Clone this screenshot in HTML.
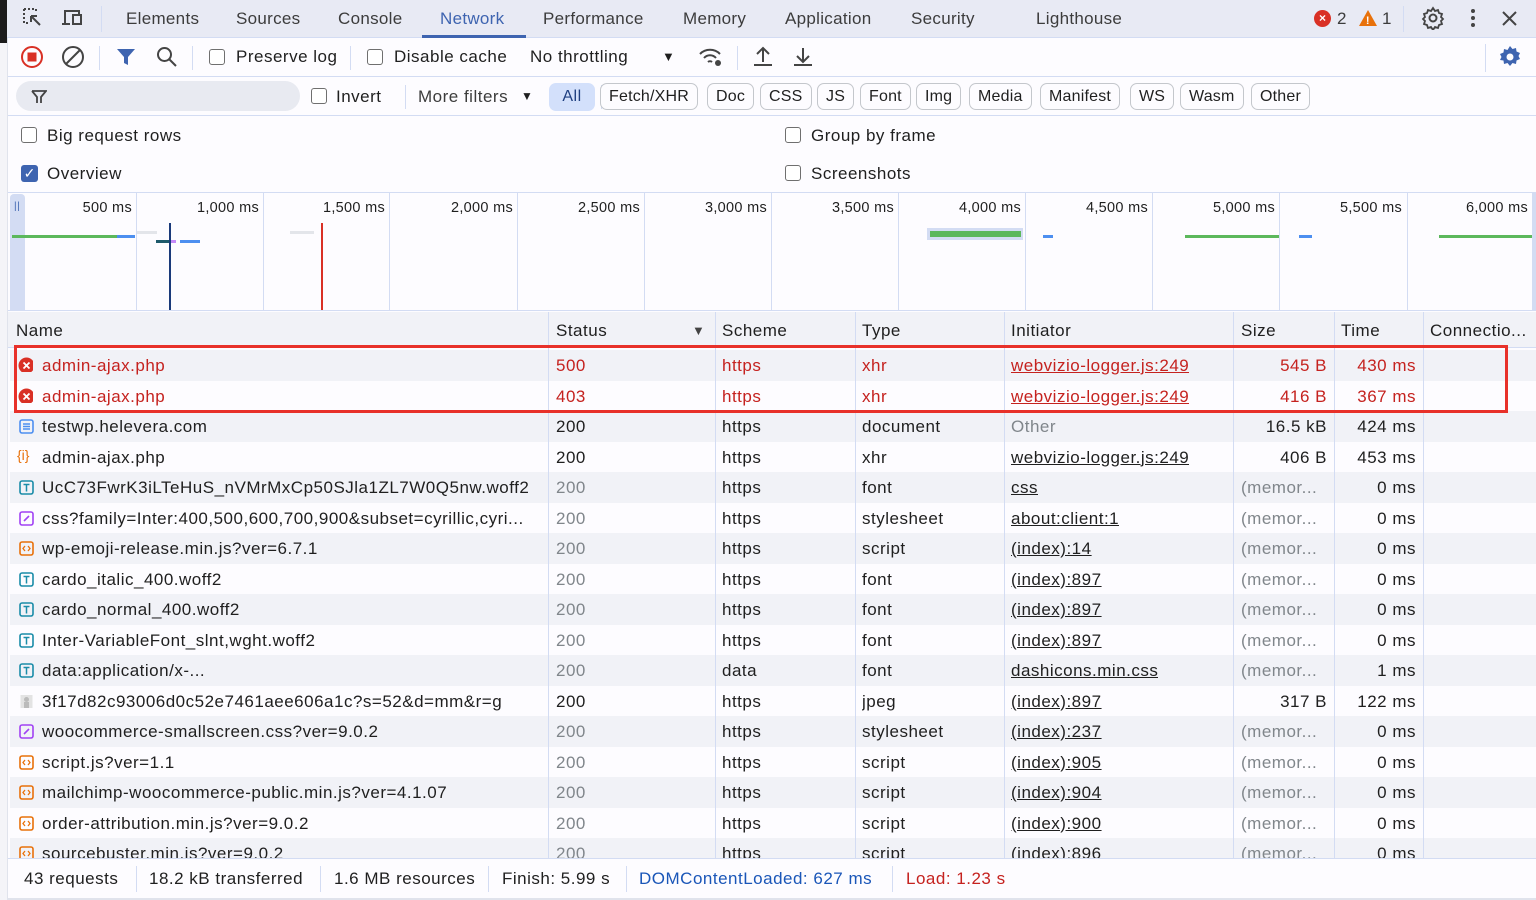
<!DOCTYPE html>
<html><head><meta charset="utf-8"><style>
*{box-sizing:border-box;margin:0;padding:0}
body{width:1536px;height:900px;overflow:hidden;background:#fdfcff;font-family:"Liberation Sans",Arial,sans-serif;font-size:17px;color:#1f1f1f;position:relative;letter-spacing:0.5px}
.a{position:absolute;white-space:nowrap}
.tabs{position:absolute;left:0;top:0;width:1536px;height:38px;background:#e8eaf4;border-bottom:1px solid #d3dcf3}
.tab{position:absolute;top:9px;color:#3c3c3c;font-size:17px;letter-spacing:0.3px}
.bar{position:absolute;left:8px;width:1528px;background:#fdfcff;border-bottom:1px solid #d3dcf3}
.cb{position:absolute;width:16px;height:16px;border:1.5px solid #6f6f6f;border-radius:3px;background:#fff}
.chip{position:absolute;top:83px;height:27px;border:1px solid #c4c7cc;border-radius:7px;padding:4px 8px 0;font-size:16px;color:#1f1f1f;background:#fdfcff;letter-spacing:0.2px}
.vl{position:absolute;width:1px;background:#d3dcf3}
.row{position:absolute;left:10px;width:1526px;height:30.5px}
.c{position:absolute;top:6px;white-space:nowrap;overflow:hidden}
.err{color:#c5221f}
.g{color:#80868b}
.u{text-decoration:underline}
.ic{position:absolute;left:9px;top:8px;width:15px;height:15px}
</style></head><body>
<div class="a" style="left:0;top:0;width:7px;height:43px;background:#1b1b1b;z-index:3"></div>
<div class="tabs">
<svg class="a" style="left:22px;top:7px" width="22" height="22" viewBox="0 0 22 22"><path d="M2 2h12v4M2 2v14h4" stroke="#444" stroke-width="2" stroke-dasharray="2 2" fill="none"/><path d="M9 9l9 9M9 9h6M9 9v6" stroke="#444" stroke-width="2" fill="none"/></svg>
<svg class="a" style="left:61px;top:7px" width="24" height="22" viewBox="0 0 24 22"><path d="M4 16V4h14v4M1 17h8" stroke="#444" stroke-width="2" fill="none"/><rect x="12" y="8" width="8" height="9" stroke="#444" stroke-width="2" fill="none"/></svg>
<div class="a" style="left:101px;top:6px;width:1px;height:26px;background:#d3dcf3"></div>
<span class="tab" style="left:126px">Elements</span>
<span class="tab" style="left:236px">Sources</span>
<span class="tab" style="left:338px">Console</span>
<span class="tab" style="left:440px;color:#3e64b0">Network</span>
<div class="a" style="left:422px;top:35px;width:104px;height:3px;background:#3e64b0"></div>
<span class="tab" style="left:543px">Performance</span>
<span class="tab" style="left:683px">Memory</span>
<span class="tab" style="left:785px">Application</span>
<span class="tab" style="left:911px">Security</span>
<span class="tab" style="left:1036px">Lighthouse</span>
<div class="a" style="left:1314px;top:10px;width:17px;height:17px;border-radius:50%;background:#d93025;color:#fff;font-size:12px;text-align:center;line-height:17px;font-weight:bold;letter-spacing:0">×</div>
<span class="tab" style="left:1337px">2</span>
<svg class="a" style="left:1358px;top:9px" width="20" height="18"><path d="M10 1L19 17H1z" fill="#e8710a"/><text x="10" y="15" font-size="11" fill="#fff" text-anchor="middle" font-family="Liberation Sans" font-weight="bold">!</text></svg>
<span class="tab" style="left:1382px">1</span>
<div class="a" style="left:1403px;top:6px;width:1px;height:26px;background:#d3dcf3"></div>
<svg class="a" style="left:1421px;top:6px" width="24" height="24" viewBox="0 0 24 24"><circle cx="12" cy="12" r="3.5" stroke="#444" stroke-width="2" fill="none"/><path d="M12 2l2 3 3-1 1 3 3 1-1 3 2 2-2 2 1 3-3 1-1 3-3-1-2 3-2-3-3 1-1-3-3-1 1-3-2-2 2-2-1-3 3-1 1-3 3 1z" stroke="#444" stroke-width="1.8" fill="none"/></svg>
<div class="a" style="left:1471px;top:9px;width:4px;height:4px;border-radius:2px;background:#444;box-shadow:0 7px 0 #444,0 14px 0 #444"></div>
<svg class="a" style="left:1501px;top:10px" width="17" height="17"><path d="M2 2l13 13M15 2L2 15" stroke="#444" stroke-width="2"/></svg>
</div>
<div class="a" style="left:0;top:38px;width:8px;height:862px;background:#f4f4f8;border-right:1px solid #e0e3ec"></div>
<div class="bar" style="top:38px;height:39px">
<svg class="a" style="left:12px;top:7px" width="24" height="24"><circle cx="12" cy="12" r="10" stroke="#d93025" stroke-width="2" fill="none"/><rect x="7.5" y="7.5" width="9" height="9" fill="#d93025"/></svg>
<svg class="a" style="left:53px;top:7px" width="24" height="24"><circle cx="12" cy="12" r="10" stroke="#444" stroke-width="2" fill="none"/><path d="M5 19L19 5" stroke="#444" stroke-width="2"/></svg>
<div class="a" style="left:91px;top:8px;width:1px;height:24px;background:#d3dcf3"></div>
<svg class="a" style="left:108px;top:9px" width="20" height="20"><path d="M1 2h18l-7 8v8l-4-2v-6z" fill="#3e64b0"/></svg>
<svg class="a" style="left:148px;top:8px" width="22" height="22"><circle cx="8.5" cy="8.5" r="6.5" stroke="#444" stroke-width="2" fill="none"/><path d="M13 13l7 7" stroke="#444" stroke-width="2"/></svg>
<div class="a" style="left:184px;top:8px;width:1px;height:24px;background:#d3dcf3"></div>
<div class="cb" style="left:201px;top:11px"></div><span class="a" style="left:228px;top:9px">Preserve log</span>
<div class="a" style="left:342px;top:8px;width:1px;height:24px;background:#d3dcf3"></div>
<div class="cb" style="left:359px;top:11px"></div><span class="a" style="left:386px;top:9px">Disable cache</span>
<span class="a" style="left:522px;top:9px">No throttling</span>
<span class="a" style="left:654px;top:11px;font-size:13px">▼</span>
<svg class="a" style="left:690px;top:7px" width="26" height="24"><path d="M2 9a14 14 0 0 1 20 0M6 13a8 8 0 0 1 12 0M10 17a3 3 0 0 1 4 0" stroke="#444" stroke-width="2" fill="none"/><circle cx="20" cy="18" r="3" fill="#444"/></svg>
<div class="a" style="left:729px;top:8px;width:1px;height:24px;background:#d3dcf3"></div>
<svg class="a" style="left:744px;top:7px" width="22" height="24"><path d="M11 17V3M5 9l6-6 6 6M2 20h18" stroke="#444" stroke-width="2" fill="none"/></svg>
<svg class="a" style="left:784px;top:7px" width="22" height="24"><path d="M11 3v14M5 11l6 6 6-6M2 20h18" stroke="#444" stroke-width="2" fill="none"/></svg>
<div class="a" style="left:1477px;top:6px;width:1px;height:28px;background:#d3dcf3"></div>
<svg class="a" style="left:1490px;top:7px" width="24" height="24" viewBox="0 0 24 24"><path d="M12 1l2.5 3 3.5-1 .5 3.5 3.5 1.5-1.5 3 1.5 3-3.5 1.5-.5 3.5-3.5-1-2.5 3-2.5-3-3.5 1-.5-3.5L2 15l1.5-3L2 9l3.5-1.5L6 4l3.5 1z" fill="#3e64b0"/><circle cx="12" cy="12" r="3.5" fill="#fdfcff"/></svg>
</div>
<div class="bar" style="top:77px;height:39px">
<div class="a" style="left:8px;top:4px;width:284px;height:30px;border-radius:15px;background:#e8eaf1"></div>
<svg class="a" style="left:23px;top:12px" width="16" height="16"><path d="M1 2h14l-5 6v6M6 14V8L1 2" stroke="#444" stroke-width="1.8" fill="none"/></svg>
<div class="cb" style="left:303px;top:11px"></div><span class="a" style="left:328px;top:10px">Invert</span>
<div class="a" style="left:397px;top:8px;width:1px;height:24px;background:#d3dcf3"></div>
<span class="a" style="left:410px;top:10px;color:#3c3c3c">More filters</span><span class="a" style="left:513px;top:12px;font-size:12px">▼</span>
<div class="a" style="left:541px;top:6px;width:46px;height:28px;border-radius:7px;background:#d3e0fb;text-align:center;padding-top:5px;font-size:16px;color:#1f3f80">All</div>
<div class="a" style="left:593px;top:8px;width:1px;height:24px;background:#d3dcf3"></div>
</div>
<div class="chip" style="left:600px">Fetch/XHR</div>
<div class="chip" style="left:707px">Doc</div>
<div class="chip" style="left:760px">CSS</div>
<div class="chip" style="left:817px">JS</div>
<div class="chip" style="left:860px">Font</div>
<div class="chip" style="left:916px">Img</div>
<div class="chip" style="left:969px">Media</div>
<div class="chip" style="left:1040px">Manifest</div>
<div class="chip" style="left:1130px">WS</div>
<div class="chip" style="left:1180px">Wasm</div>
<div class="chip" style="left:1251px">Other</div>
<div class="cb" style="left:21px;top:127px"></div><span class="a" style="left:47px;top:126px">Big request rows</span>
<div class="cb" style="left:785px;top:127px"></div><span class="a" style="left:811px;top:126px">Group by frame</span>
<div class="a" style="left:21px;top:165px;width:17px;height:17px;border-radius:3px;background:#3e64b0;color:#fff;font-size:14px;text-align:center;line-height:17px;letter-spacing:0">✓</div><span class="a" style="left:47px;top:164px">Overview</span>
<div class="cb" style="left:785px;top:165px"></div><span class="a" style="left:811px;top:164px">Screenshots</span>
<div class="a" style="left:8px;top:192px;width:1528px;height:119px;background:#fdfcff;border-top:1px solid #d3dcf3;border-bottom:1px solid #d3dcf3"></div>
<div class="a" style="left:10px;top:194px;width:15px;height:117px;background:#d3dcf3;border-radius:4px 4px 0 0"></div>
<div class="a" style="left:14px;top:201px;font-size:10px;color:#3e64b0">||</div>
<div class="vl" style="left:136px;top:193px;height:117px"></div>
<div class="vl" style="left:263px;top:193px;height:117px"></div>
<div class="vl" style="left:389px;top:193px;height:117px"></div>
<div class="vl" style="left:517px;top:193px;height:117px"></div>
<div class="vl" style="left:644px;top:193px;height:117px"></div>
<div class="vl" style="left:771px;top:193px;height:117px"></div>
<div class="vl" style="left:898px;top:193px;height:117px"></div>
<div class="vl" style="left:1025px;top:193px;height:117px"></div>
<div class="vl" style="left:1152px;top:193px;height:117px"></div>
<div class="vl" style="left:1279px;top:193px;height:117px"></div>
<div class="vl" style="left:1407px;top:193px;height:117px"></div>
<div style="font-size:14.5px;color:#1f1f1f;letter-spacing:0.3px">
<span class="a" style="right:1404px;top:200px">500 ms</span>
<span class="a" style="right:1277px;top:200px">1,000 ms</span>
<span class="a" style="right:1151px;top:200px">1,500 ms</span>
<span class="a" style="right:1023px;top:200px">2,000 ms</span>
<span class="a" style="right:896px;top:200px">2,500 ms</span>
<span class="a" style="right:769px;top:200px">3,000 ms</span>
<span class="a" style="right:642px;top:200px">3,500 ms</span>
<span class="a" style="right:515px;top:200px">4,000 ms</span>
<span class="a" style="right:388px;top:200px">4,500 ms</span>
<span class="a" style="right:261px;top:200px">5,000 ms</span>
<span class="a" style="right:134px;top:200px">5,500 ms</span>
<span class="a" style="right:8px;top:200px">6,000 ms</span>
</div>
<div class="a" style="left:1532px;top:193px;width:4px;height:117px;background:#d3dcf3"></div>
<div class="a" style="left:12px;top:235px;width:105px;height:3px;background:#5cb85c"></div>
<div class="a" style="left:117px;top:235px;width:18px;height:3px;background:#4d8ff0"></div>
<div class="a" style="left:137px;top:231px;width:20px;height:3px;background:#e3e5ea"></div>
<div class="a" style="left:156px;top:240px;width:13px;height:3px;background:#1e5a6b"></div>
<div class="a" style="left:170px;top:240px;width:6px;height:3px;background:#c58af9"></div>
<div class="a" style="left:180px;top:240px;width:20px;height:3px;background:#4d8ff0"></div>
<div class="a" style="left:290px;top:231px;width:24px;height:3px;background:#e3e5ea"></div>
<div class="a" style="left:169px;top:223px;width:2px;height:87px;background:#1a3a7a"></div>
<div class="a" style="left:321px;top:223px;width:2px;height:87px;background:#d93025"></div>
<div class="a" style="left:927px;top:228px;width:96px;height:12px;background:#d3dcf3"></div>
<div class="a" style="left:930px;top:231px;width:91px;height:6px;background:#5cb85c"></div>
<div class="a" style="left:1043px;top:235px;width:10px;height:3px;background:#4d8ff0"></div>
<div class="a" style="left:1185px;top:235px;width:94px;height:3px;background:#5cb85c"></div>
<div class="a" style="left:1299px;top:235px;width:13px;height:3px;background:#4d8ff0"></div>
<div class="a" style="left:1439px;top:235px;width:93px;height:3px;background:#5cb85c"></div>
<div class="a" style="left:8px;top:312px;width:1528px;height:36px;background:#f1f2f7;border-bottom:1px solid #d3dcf3"></div>
<span class="a" style="left:16px;top:321px">Name</span>
<span class="a" style="left:556px;top:321px">Status</span><span class="a" style="left:692px;top:323px;font-size:13px;color:#444">▼</span>
<span class="a" style="left:722px;top:321px">Scheme</span>
<span class="a" style="left:862px;top:321px">Type</span>
<span class="a" style="left:1011px;top:321px">Initiator</span>
<span class="a" style="left:1241px;top:321px">Size</span>
<span class="a" style="left:1341px;top:321px">Time</span>
<span class="a" style="left:1430px;top:321px">Connectio...</span>
<div id="rows" class="a" style="left:0;top:350px;width:1536px;height:508px;overflow:hidden">
<div class="row" style="top:0;background:#f1f2f7"><svg class="ic" style="left:8px;top:7px" width="17" height="17"><circle cx="8.5" cy="8.5" r="8" fill="#d93025"/><path d="M5.5 5.5l6 6M11.5 5.5l-6 6" stroke="#fff" stroke-width="1.8"/></svg><span class="c err" style="left:32px">admin-ajax.php</span><span class="c err" style="left:546px">500</span><span class="c err" style="left:712px">https</span><span class="c err" style="left:852px">xhr</span><span class="c err u" style="left:1001px">webvizio-logger.js:249</span><span class="c err" style="right:209px">545 B</span><span class="c err" style="right:120px">430 ms</span></div>
<div class="row" style="top:30.5px"><svg class="ic" style="left:8px;top:7px" width="17" height="17"><circle cx="8.5" cy="8.5" r="8" fill="#d93025"/><path d="M5.5 5.5l6 6M11.5 5.5l-6 6" stroke="#fff" stroke-width="1.8"/></svg><span class="c err" style="left:32px">admin-ajax.php</span><span class="c err" style="left:546px">403</span><span class="c err" style="left:712px">https</span><span class="c err" style="left:852px">xhr</span><span class="c err u" style="left:1001px">webvizio-logger.js:249</span><span class="c err" style="right:209px">416 B</span><span class="c err" style="right:120px">367 ms</span></div>
<div class="row" style="top:61px;background:#f1f2f7"><svg class="ic" width="15" height="15"><rect x="1" y="1" width="13" height="13" rx="2" stroke="#4d8ff0" stroke-width="1.6" fill="none"/><path d="M4 5h7M4 7.5h7M4 10h7" stroke="#4d8ff0" stroke-width="1.4"/></svg><span class="c" style="left:32px">testwp.helevera.com</span><span class="c" style="left:546px">200</span><span class="c" style="left:712px">https</span><span class="c" style="left:852px">document</span><span class="c g" style="left:1001px">Other</span><span class="c" style="right:209px">16.5 kB</span><span class="c" style="right:120px">424 ms</span></div>
<div class="row" style="top:91.5px"><span class="ic" style="color:#e8710a;font-size:14px;top:5px;left:7px;letter-spacing:0">{i}</span><span class="c" style="left:32px">admin-ajax.php</span><span class="c" style="left:546px">200</span><span class="c" style="left:712px">https</span><span class="c" style="left:852px">xhr</span><span class="c u" style="left:1001px">webvizio-logger.js:249</span><span class="c" style="right:209px">406 B</span><span class="c" style="right:120px">453 ms</span></div>
<div class="row" style="top:122px;background:#f1f2f7"><svg class="ic" width="15" height="15"><rect x="1" y="1" width="13" height="13" rx="2" stroke="#1a8ca8" stroke-width="1.6" fill="none"/><path d="M4.5 4.5h6M7.5 4.5v7" stroke="#1a8ca8" stroke-width="1.5"/></svg><span class="c" style="left:32px">UcC73FwrK3iLTeHuS_nVMrMxCp50SJla1ZL7W0Q5nw.woff2</span><span class="c g" style="left:546px">200</span><span class="c" style="left:712px">https</span><span class="c" style="left:852px">font</span><span class="c u" style="left:1001px">css</span><span class="c g" style="left:1231px">(memor...</span><span class="c" style="right:120px">0 ms</span></div>
<div class="row" style="top:152.5px"><svg class="ic" width="15" height="15"><rect x="1" y="1" width="13" height="13" rx="2" stroke="#a142f4" stroke-width="1.6" fill="none"/><path d="M5 10l5-5" stroke="#a142f4" stroke-width="1.6"/></svg><span class="c" style="left:32px;width:510px">css?family=Inter:400,500,600,700,900&amp;subset=cyrillic,cyri...</span><span class="c g" style="left:546px">200</span><span class="c" style="left:712px">https</span><span class="c" style="left:852px">stylesheet</span><span class="c u" style="left:1001px">about:client:1</span><span class="c g" style="left:1231px">(memor...</span><span class="c" style="right:120px">0 ms</span></div>
<div class="row" style="top:183px;background:#f1f2f7"><svg class="ic" width="15" height="15"><rect x="1" y="1" width="13" height="13" rx="2" stroke="#e8710a" stroke-width="1.6" fill="none"/><path d="M6 5l-2 2.5 2 2.5M9 5l2 2.5-2 2.5" stroke="#e8710a" stroke-width="1.3" fill="none"/></svg><span class="c" style="left:32px">wp-emoji-release.min.js?ver=6.7.1</span><span class="c g" style="left:546px">200</span><span class="c" style="left:712px">https</span><span class="c" style="left:852px">script</span><span class="c u" style="left:1001px">(index):14</span><span class="c g" style="left:1231px">(memor...</span><span class="c" style="right:120px">0 ms</span></div>
<div class="row" style="top:213.5px"><svg class="ic" width="15" height="15"><rect x="1" y="1" width="13" height="13" rx="2" stroke="#1a8ca8" stroke-width="1.6" fill="none"/><path d="M4.5 4.5h6M7.5 4.5v7" stroke="#1a8ca8" stroke-width="1.5"/></svg><span class="c" style="left:32px">cardo_italic_400.woff2</span><span class="c g" style="left:546px">200</span><span class="c" style="left:712px">https</span><span class="c" style="left:852px">font</span><span class="c u" style="left:1001px">(index):897</span><span class="c g" style="left:1231px">(memor...</span><span class="c" style="right:120px">0 ms</span></div>
<div class="row" style="top:244px;background:#f1f2f7"><svg class="ic" width="15" height="15"><rect x="1" y="1" width="13" height="13" rx="2" stroke="#1a8ca8" stroke-width="1.6" fill="none"/><path d="M4.5 4.5h6M7.5 4.5v7" stroke="#1a8ca8" stroke-width="1.5"/></svg><span class="c" style="left:32px">cardo_normal_400.woff2</span><span class="c g" style="left:546px">200</span><span class="c" style="left:712px">https</span><span class="c" style="left:852px">font</span><span class="c u" style="left:1001px">(index):897</span><span class="c g" style="left:1231px">(memor...</span><span class="c" style="right:120px">0 ms</span></div>
<div class="row" style="top:274.5px"><svg class="ic" width="15" height="15"><rect x="1" y="1" width="13" height="13" rx="2" stroke="#1a8ca8" stroke-width="1.6" fill="none"/><path d="M4.5 4.5h6M7.5 4.5v7" stroke="#1a8ca8" stroke-width="1.5"/></svg><span class="c" style="left:32px">Inter-VariableFont_slnt,wght.woff2</span><span class="c g" style="left:546px">200</span><span class="c" style="left:712px">https</span><span class="c" style="left:852px">font</span><span class="c u" style="left:1001px">(index):897</span><span class="c g" style="left:1231px">(memor...</span><span class="c" style="right:120px">0 ms</span></div>
<div class="row" style="top:305px;background:#f1f2f7"><svg class="ic" width="15" height="15"><rect x="1" y="1" width="13" height="13" rx="2" stroke="#1a8ca8" stroke-width="1.6" fill="none"/><path d="M4.5 4.5h6M7.5 4.5v7" stroke="#1a8ca8" stroke-width="1.5"/></svg><span class="c" style="left:32px">data:application/x-...</span><span class="c g" style="left:546px">200</span><span class="c" style="left:712px">data</span><span class="c" style="left:852px">font</span><span class="c u" style="left:1001px">dashicons.min.css</span><span class="c g" style="left:1231px">(memor...</span><span class="c" style="right:120px">1 ms</span></div>
<div class="row" style="top:335.5px"><svg class="ic" width="15" height="15"><rect x="1.5" y="1" width="12" height="13" fill="#e3e3e3"/><path d="M5 14V8h5v6" fill="#bbb"/><circle cx="7.5" cy="5.5" r="2.5" fill="#bbb"/></svg><span class="c" style="left:32px">3f17d82c93006d0c52e7461aee606a1c?s=52&amp;d=mm&amp;r=g</span><span class="c" style="left:546px">200</span><span class="c" style="left:712px">https</span><span class="c" style="left:852px">jpeg</span><span class="c u" style="left:1001px">(index):897</span><span class="c" style="right:209px">317 B</span><span class="c" style="right:120px">122 ms</span></div>
<div class="row" style="top:366px;background:#f1f2f7"><svg class="ic" width="15" height="15"><rect x="1" y="1" width="13" height="13" rx="2" stroke="#a142f4" stroke-width="1.6" fill="none"/><path d="M5 10l5-5" stroke="#a142f4" stroke-width="1.6"/></svg><span class="c" style="left:32px">woocommerce-smallscreen.css?ver=9.0.2</span><span class="c g" style="left:546px">200</span><span class="c" style="left:712px">https</span><span class="c" style="left:852px">stylesheet</span><span class="c u" style="left:1001px">(index):237</span><span class="c g" style="left:1231px">(memor...</span><span class="c" style="right:120px">0 ms</span></div>
<div class="row" style="top:396.5px"><svg class="ic" width="15" height="15"><rect x="1" y="1" width="13" height="13" rx="2" stroke="#e8710a" stroke-width="1.6" fill="none"/><path d="M6 5l-2 2.5 2 2.5M9 5l2 2.5-2 2.5" stroke="#e8710a" stroke-width="1.3" fill="none"/></svg><span class="c" style="left:32px">script.js?ver=1.1</span><span class="c g" style="left:546px">200</span><span class="c" style="left:712px">https</span><span class="c" style="left:852px">script</span><span class="c u" style="left:1001px">(index):905</span><span class="c g" style="left:1231px">(memor...</span><span class="c" style="right:120px">0 ms</span></div>
<div class="row" style="top:427px;background:#f1f2f7"><svg class="ic" width="15" height="15"><rect x="1" y="1" width="13" height="13" rx="2" stroke="#e8710a" stroke-width="1.6" fill="none"/><path d="M6 5l-2 2.5 2 2.5M9 5l2 2.5-2 2.5" stroke="#e8710a" stroke-width="1.3" fill="none"/></svg><span class="c" style="left:32px">mailchimp-woocommerce-public.min.js?ver=4.1.07</span><span class="c g" style="left:546px">200</span><span class="c" style="left:712px">https</span><span class="c" style="left:852px">script</span><span class="c u" style="left:1001px">(index):904</span><span class="c g" style="left:1231px">(memor...</span><span class="c" style="right:120px">0 ms</span></div>
<div class="row" style="top:457.5px"><svg class="ic" width="15" height="15"><rect x="1" y="1" width="13" height="13" rx="2" stroke="#e8710a" stroke-width="1.6" fill="none"/><path d="M6 5l-2 2.5 2 2.5M9 5l2 2.5-2 2.5" stroke="#e8710a" stroke-width="1.3" fill="none"/></svg><span class="c" style="left:32px">order-attribution.min.js?ver=9.0.2</span><span class="c g" style="left:546px">200</span><span class="c" style="left:712px">https</span><span class="c" style="left:852px">script</span><span class="c u" style="left:1001px">(index):900</span><span class="c g" style="left:1231px">(memor...</span><span class="c" style="right:120px">0 ms</span></div>
<div class="row" style="top:488px;background:#f1f2f7"><svg class="ic" width="15" height="15"><rect x="1" y="1" width="13" height="13" rx="2" stroke="#e8710a" stroke-width="1.6" fill="none"/><path d="M6 5l-2 2.5 2 2.5M9 5l2 2.5-2 2.5" stroke="#e8710a" stroke-width="1.3" fill="none"/></svg><span class="c" style="left:32px">sourcebuster.min.js?ver=9.0.2</span><span class="c g" style="left:546px">200</span><span class="c" style="left:712px">https</span><span class="c" style="left:852px">script</span><span class="c u" style="left:1001px">(index):896</span><span class="c g" style="left:1231px">(memor...</span><span class="c" style="right:120px">0 ms</span></div>
</div>
<div class="vl" style="left:548px;top:312px;height:546px"></div>
<div class="vl" style="left:715px;top:312px;height:546px"></div>
<div class="vl" style="left:855px;top:312px;height:546px"></div>
<div class="vl" style="left:1004px;top:312px;height:546px"></div>
<div class="vl" style="left:1233px;top:312px;height:546px"></div>
<div class="vl" style="left:1334px;top:312px;height:546px"></div>
<div class="vl" style="left:1423px;top:312px;height:546px"></div>
<div class="a" style="left:14px;top:345px;width:1494px;height:68px;border:3px solid #e8312a"></div>
<div class="a" style="left:8px;top:858px;width:1528px;height:42px;background:#fdfcff;border-top:1px solid #d3dcf3"></div>
<span class="a" style="left:24px;top:869px">43 requests</span>
<div class="vl" style="left:136px;top:866px;height:26px"></div>
<span class="a" style="left:149px;top:869px">18.2 kB transferred</span>
<div class="vl" style="left:320px;top:866px;height:26px"></div>
<span class="a" style="left:334px;top:869px">1.6 MB resources</span>
<div class="vl" style="left:488px;top:866px;height:26px"></div>
<span class="a" style="left:502px;top:869px">Finish: 5.99 s</span>
<div class="vl" style="left:626px;top:866px;height:26px"></div>
<span class="a" style="left:639px;top:869px;color:#1a56b8">DOMContentLoaded: 627 ms</span>
<div class="vl" style="left:892px;top:866px;height:26px"></div>
<span class="a" style="left:906px;top:869px;color:#c5221f">Load: 1.23 s</span>
<div class="a" style="left:8px;top:898px;width:1528px;height:2px;background:#e0e3ec"></div>
</body></html>
